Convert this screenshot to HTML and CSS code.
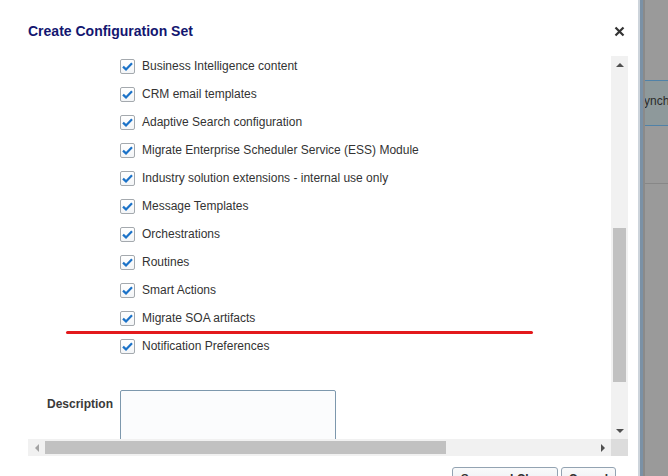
FILE: index.html
```html
<!DOCTYPE html>
<html lang="en">
<head>
    <meta charset="UTF-8">
    <meta name="viewport" content="width=device-width, initial-scale=1.0">
    <link rel="stylesheet" href="styles.css">
</head>
<body>
    <div class="screen">
        <div class="dialog">
            <!-- Title bar -->
            <div class="dialog-header">
                <h1 class="dialog-title">Create Configuration Set</h1>
                <svg class="dialog-close" width="11" height="11" viewBox="0 0 11 11">
                    <path d="M1.5 1.5 L9.5 9.5 M9.5 1.5 L1.5 9.5" stroke="#333" stroke-width="2.2" fill="none"/>
                </svg>
            </div>

            <!-- Scrolling panel with the options -->
            <div class="scroll-box">
                <div class="scroll-content">
                    <ul class="check-list">
                        <li class="check-row"><span class="check-box"><svg width="11" height="9" viewBox="0 0 11 9"><path d="M1 4.6 L4 7.4 L10 1.2" stroke="#1b72c8" stroke-width="2.2" fill="none"/></svg></span>Business Intelligence content</li>
                        <li class="check-row"><span class="check-box"><svg width="11" height="9" viewBox="0 0 11 9"><path d="M1 4.6 L4 7.4 L10 1.2" stroke="#1b72c8" stroke-width="2.2" fill="none"/></svg></span>CRM email templates</li>
                        <li class="check-row"><span class="check-box"><svg width="11" height="9" viewBox="0 0 11 9"><path d="M1 4.6 L4 7.4 L10 1.2" stroke="#1b72c8" stroke-width="2.2" fill="none"/></svg></span>Adaptive Search configuration</li>
                        <li class="check-row"><span class="check-box"><svg width="11" height="9" viewBox="0 0 11 9"><path d="M1 4.6 L4 7.4 L10 1.2" stroke="#1b72c8" stroke-width="2.2" fill="none"/></svg></span>Migrate Enterprise Scheduler Service (ESS) Module</li>
                        <li class="check-row"><span class="check-box"><svg width="11" height="9" viewBox="0 0 11 9"><path d="M1 4.6 L4 7.4 L10 1.2" stroke="#1b72c8" stroke-width="2.2" fill="none"/></svg></span>Industry solution extensions - internal use only</li>
                        <li class="check-row"><span class="check-box"><svg width="11" height="9" viewBox="0 0 11 9"><path d="M1 4.6 L4 7.4 L10 1.2" stroke="#1b72c8" stroke-width="2.2" fill="none"/></svg></span>Message Templates</li>
                        <li class="check-row"><span class="check-box"><svg width="11" height="9" viewBox="0 0 11 9"><path d="M1 4.6 L4 7.4 L10 1.2" stroke="#1b72c8" stroke-width="2.2" fill="none"/></svg></span>Orchestrations</li>
                        <li class="check-row"><span class="check-box"><svg width="11" height="9" viewBox="0 0 11 9"><path d="M1 4.6 L4 7.4 L10 1.2" stroke="#1b72c8" stroke-width="2.2" fill="none"/></svg></span>Routines</li>
                        <li class="check-row"><span class="check-box"><svg width="11" height="9" viewBox="0 0 11 9"><path d="M1 4.6 L4 7.4 L10 1.2" stroke="#1b72c8" stroke-width="2.2" fill="none"/></svg></span>Smart Actions</li>
                        <li class="check-row"><span class="check-box"><svg width="11" height="9" viewBox="0 0 11 9"><path d="M1 4.6 L4 7.4 L10 1.2" stroke="#1b72c8" stroke-width="2.2" fill="none"/></svg></span>Migrate SOA artifacts</li>
                        <li class="check-row"><span class="check-box"><svg width="11" height="9" viewBox="0 0 11 9"><path d="M1 4.6 L4 7.4 L10 1.2" stroke="#1b72c8" stroke-width="2.2" fill="none"/></svg></span>Notification Preferences</li>
                    </ul>
                    <div class="field-row">
                        <label class="field-label" for="descInput">Description</label>
                        <textarea class="field-input" id="descInput"></textarea>
                    </div>
                </div>

                <!-- Vertical scrollbar -->
                <div class="vbar">
                    <div class="sb-button"><span class="arrow-up"></span></div>
                    <div class="vbar-track"><div class="vbar-thumb"></div></div>
                    <div class="sb-button"><span class="arrow-down"></span></div>
                </div>

                <!-- Horizontal scrollbar -->
                <div class="hbar">
                    <div class="sb-button"><span class="arrow-left"></span></div>
                    <div class="hbar-track"><div class="hbar-thumb"></div></div>
                    <div class="sb-button"><span class="arrow-right"></span></div>
                </div>
                <div class="sb-corner"></div>
            </div>

            <div class="dialog-footer">
                <button class="dlg-button wide">Save and Close</button>
                <button class="dlg-button">Cancel</button>
            </div>
        </div>

        <div class="dialog-edge"></div>

        <!-- Page behind the modal overlay -->
        <div class="backdrop">
            <div class="sync-bar">ynchronize</div>
            <div class="backdrop-line"></div>
        </div>
    </div>

    <!-- Red underline drawn on the screenshot -->
    <div class="annotation"></div>
</body>
</html>
```

FILE: styles.css
```css
html, body {
    margin: 0;
    height: 476px;
    overflow: hidden;
    font-family: "Liberation Sans", Arial, sans-serif;
    font-size: 12px;
    color: #333;
}
.screen {
    display: flex;
    height: 476px;
    overflow: hidden;
}
.dialog {
    width: 638px;
    flex-shrink: 0;
    background: #fff;
}
.dialog-header {
    display: flex;
    justify-content: space-between;
    align-items: center;
    height: 56px;
    box-sizing: border-box;
    padding: 6px 13px 0 28px;
}
.dialog-title {
    margin: 0;
    font-size: 14px;
    line-height: 16px;
    font-weight: bold;
    color: #131670;
}
.dialog-close {
    display: block;
}

/* scroll panel: content + two scrollbars */
.scroll-box {
    display: grid;
    grid-template-columns: 583px 17px;
    grid-template-rows: 383px 17px;
    margin-left: 28px;
    width: 600px;
}
.scroll-content {
    overflow: hidden;
}
.check-list {
    list-style: none;
    margin: 0;
    padding: 0 0 0 92px;
    display: flex;
    flex-direction: column;
    gap: 8px;
}
.check-row {
    display: flex;
    align-items: center;
    height: 20px;
    white-space: nowrap;
}
.check-box {
    display: flex;
    align-items: center;
    justify-content: center;
    width: 13px;
    height: 13px;
    margin-right: 7px;
    border: 1px solid #a4a9ae;
    border-radius: 2px;
    background: linear-gradient(#fff, #f3f5f7);
}
.field-row {
    display: flex;
    gap: 7px;
    margin-top: 34px;
}
.field-label {
    width: 85px;
    text-align: right;
    padding-top: 7px;
    font-weight: bold;
    color: #3a3a3a;
}
.field-input {
    width: 216px;
    height: 60px;
    box-sizing: border-box;
    margin: 0;
    border: 1px solid #7d98ad;
    border-radius: 2px;
    background: #fbfcfd;
    resize: none;
}

.vbar, .hbar {
    display: flex;
    background: #f1f1f1;
}
.vbar {
    flex-direction: column;
}
.sb-button {
    width: 17px;
    height: 17px;
    flex-shrink: 0;
    display: flex;
    align-items: center;
    justify-content: center;
}
.vbar-track, .hbar-track {
    flex: 1;
}
.vbar-thumb {
    margin: 155px 2px 0 2px;
    width: 13px;
    height: 154px;
    background: #c1c1c1;
}
.hbar-thumb {
    margin-top: 2px;
    width: 401px;
    height: 13px;
    background: #c1c1c1;
}
.sb-corner {
    background: #dcdcdc;
}
.arrow-up, .arrow-down, .arrow-left, .arrow-right {
    width: 0;
    height: 0;
    border: 4px solid transparent;
}
.arrow-up {
    border-bottom-color: #505050;
    border-top-width: 0;
}
.arrow-down {
    border-top-color: #505050;
    border-bottom-width: 0;
}
.arrow-left {
    border-right-color: #a3a3a3;
    border-left-width: 0;
}
.arrow-right {
    border-left-color: #505050;
    border-right-width: 0;
}

.dialog-footer {
    display: flex;
    justify-content: flex-end;
    align-items: flex-start;
    gap: 3px;
    padding: 11px 22px 0 0;
}
.dlg-button {
    width: 55px;
    height: 24px;
    padding: 0;
    border: 1px solid #93a3b2;
    border-radius: 3px;
    background: linear-gradient(#f9fafb, #e8ecef);
    font-family: inherit;
    font-size: 12px;
    font-weight: bold;
    line-height: 20px;
    color: #333;
}
.dlg-button.wide {
    width: 106px;
}

.dialog-edge {
    width: 7px;
    flex-shrink: 0;
    background: linear-gradient(to right, #cdd4db 0, #cdd4db 2px, #7a91a6 2px, #7a91a6 5px, #8a8a8a 5px);
}
.backdrop {
    flex: 1;
    background: #9a9a9a;
    overflow: hidden;
}
.sync-bar {
    margin-top: 80px;
    height: 44px;
    margin-left: -1px;
    line-height: 40px;
    border-top: 1px solid #5082a8;
    border-bottom: 1px solid #5082a8;
    background: #8e999b;
    color: #2b2b2b;
    white-space: nowrap;
}
.backdrop-line {
    margin-top: 57px;
    height: 1px;
    background: #878787;
}

.annotation {
    position: absolute;
    left: 66px;
    top: 331px;
    width: 467px;
    height: 3px;
    border-radius: 2px;
    background: #e3191c;
}
```
